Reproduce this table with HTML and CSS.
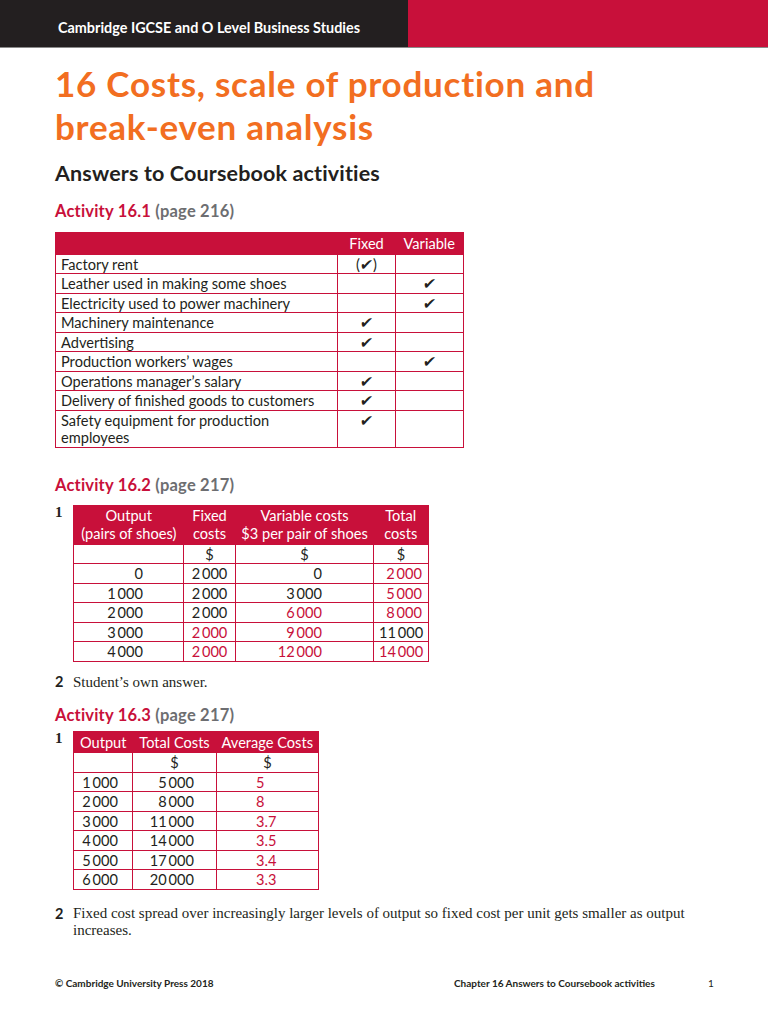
FILE: index.html
```html
<!DOCTYPE html>
<html lang="en">
<head>
<meta charset="utf-8">
<title>Costs, scale of production and break-even analysis</title>
<link rel="stylesheet" href="styles.css">
</head>
<body>
<header class="topbar">
  <div class="topbar-dark"><span class="book">Cambridge IGCSE and O Level Business Studies</span></div>
  <div class="topbar-red"></div>
</header>

<main class="page">
  <h1 class="title">16 Costs, scale of production and<br>break-even analysis</h1>
  <h2 class="subtitle">Answers to Coursebook activities</h2>

  <h3 class="activity a1"><span class="act">Activity 16.1</span> <span class="pg">(page 216)</span></h3>
  <table class="tbl t1">
    <thead>
      <tr><th class="c-item"></th><th class="c-fix">Fixed</th><th class="c-var">Variable</th></tr>
    </thead>
    <tbody>
      <tr><td>Factory rent</td><td class="ck">(<span class="tick">✔</span>)</td><td></td></tr>
      <tr><td>Leather used in making some shoes</td><td></td><td class="ck"><span class="tick">✔</span></td></tr>
      <tr><td>Electricity used to power machinery</td><td></td><td class="ck"><span class="tick">✔</span></td></tr>
      <tr><td>Machinery maintenance</td><td class="ck"><span class="tick">✔</span></td><td></td></tr>
      <tr><td>Advertising</td><td class="ck"><span class="tick">✔</span></td><td></td></tr>
      <tr><td>Production workers’ wages</td><td></td><td class="ck"><span class="tick">✔</span></td></tr>
      <tr><td>Operations manager’s salary</td><td class="ck"><span class="tick">✔</span></td><td></td></tr>
      <tr><td>Delivery of finished goods to customers</td><td class="ck"><span class="tick">✔</span></td><td></td></tr>
      <tr><td>Safety equipment for production<br>employees</td><td class="ck"><span class="tick">✔</span></td><td></td></tr>
    </tbody>
  </table>

  <h3 class="activity a2"><span class="act">Activity 16.2</span> <span class="pg">(page 217)</span></h3>
  <div class="q">
    <span class="qn">1</span>
    <table class="tbl t2">
      <thead>
        <tr><th class="w-out">Output<br>(pairs of shoes)</th><th class="w-fix">Fixed<br>costs</th><th class="w-var">Variable costs<br>$3 per pair of shoes</th><th class="w-tot">Total<br>costs</th></tr>
      </thead>
      <tbody>
        <tr><td></td><td class="ctr">$</td><td class="ctr">$</td><td class="ctr">$</td></tr>
        <tr><td class="r-out">0</td><td class="ctr">2&#8201;000</td><td class="r-var">0</td><td class="r-tot red">2&#8201;000</td></tr>
        <tr><td class="r-out">1&#8201;000</td><td class="ctr">2&#8201;000</td><td class="r-var">3&#8201;000</td><td class="r-tot red">5&#8201;000</td></tr>
        <tr><td class="r-out">2&#8201;000</td><td class="ctr">2&#8201;000</td><td class="r-var red">6&#8201;000</td><td class="r-tot red">8&#8201;000</td></tr>
        <tr><td class="r-out">3&#8201;000</td><td class="ctr red">2&#8201;000</td><td class="r-var red">9&#8201;000</td><td class="r-tot">11&#8201;000</td></tr>
        <tr><td class="r-out">4&#8201;000</td><td class="ctr red">2&#8201;000</td><td class="r-var red">12&#8201;000</td><td class="r-tot red">14&#8201;000</td></tr>
      </tbody>
    </table>
  </div>
  <p class="ans"><span class="qn2">2</span>Student’s own answer.</p>

  <h3 class="activity a3"><span class="act">Activity 16.3</span> <span class="pg">(page 217)</span></h3>
  <div class="q">
    <span class="qn">1</span>
    <table class="tbl t3">
      <thead>
        <tr><th class="x-out">Output</th><th class="x-tot">Total Costs</th><th class="x-avg">Average Costs</th></tr>
      </thead>
      <tbody>
        <tr><td></td><td class="ctr">$</td><td class="ctr">$</td></tr>
        <tr><td class="s-out">1&#8201;000</td><td class="s-tot">5&#8201;000</td><td class="s-avg red">5</td></tr>
        <tr><td class="s-out">2&#8201;000</td><td class="s-tot">8&#8201;000</td><td class="s-avg red">8</td></tr>
        <tr><td class="s-out">3&#8201;000</td><td class="s-tot">11&#8201;000</td><td class="s-avg red">3.7</td></tr>
        <tr><td class="s-out">4&#8201;000</td><td class="s-tot">14&#8201;000</td><td class="s-avg red">3.5</td></tr>
        <tr><td class="s-out">5&#8201;000</td><td class="s-tot">17&#8201;000</td><td class="s-avg red">3.4</td></tr>
        <tr><td class="s-out">6&#8201;000</td><td class="s-tot">20&#8201;000</td><td class="s-avg red">3.3</td></tr>
      </tbody>
    </table>
  </div>
  <p class="ans hang"><span class="qn2">2</span><span>Fixed cost spread over increasingly larger levels of output so fixed cost per unit gets smaller as output increases.</span></p>
</main>

<footer class="foot">
  <span class="copy">© Cambridge University Press 2018</span>
  <span class="chap">Chapter 16 Answers to Coursebook activities</span>
  <span class="pno">1</span>
</footer>
</body>
</html>
```

FILE: styles.css
```css
* { box-sizing: border-box; }
html, body { margin: 0; padding: 0; }
body {
  width: 768px;
  height: 1024px;
  background: #fff;
  color: #231f20;
  font-family: Lato, "Open Sans", sans-serif;
  position: relative;
}

.topbar {
  display: flex;
  height: 48px;
  border-bottom: 1px solid #8a8a8a;
}
.topbar-dark {
  width: 408px;
  background: #231f20;
  display: flex;
  align-items: center;
  padding-left: 58px;
  padding-top: 8px;
}
.book {
  color: #fff;
  font-size: 14.4px;
  font-weight: 700;
}
.topbar-red {
  flex: 1;
  background: #c8103a;
}

.page {
  padding: 14px 0 0 55px;
}

.title {
  margin: 0;
  color: #f26e21;
  font-size: 35px;
  font-weight: 700;
  line-height: 43px;
  letter-spacing: 0.75px;
}
.subtitle {
  margin: 12px 0 0;
  font-size: 21.5px;
  font-weight: 700;
  line-height: 26px;
  letter-spacing: 0.15px;
  color: #231f20;
}
.activity {
  margin: 12px 0 7px;
  font-size: 16.5px;
  font-weight: 700;
  line-height: 20px;
  letter-spacing: 0.2px;
}
.act { color: #c8103a; }
.pg { color: #6d6e71; }
.a1 { margin-top: 15px; margin-bottom: 11px; }
.a2 { margin-top: 27px; margin-bottom: 10px; }
.a3 { margin-top: 14px; margin-bottom: 6px; }

.tbl {
  border-collapse: collapse;
  table-layout: fixed;
  font-size: 14.6px;
  line-height: 17.5px;
  border: 1.5px solid #c8103a;
}
.tbl th {
  background: #c8103a;
  color: #fff;
  font-weight: 400;
  padding: 2px 2px 1px;
  text-align: center;
  border: none;
  white-space: nowrap;
}
.tbl td {
  border: 1px solid #c8103a;
  padding: 1px 5px 0;
  color: #231f20;
  white-space: nowrap;
}
.tbl tbody tr + tr td { border-top-color: #d95e78; }
.tbl td.red { color: #c8103a; }
.ctr { text-align: center; }

.t1 { width: 408px; }
.t1 .c-item { width: 282px; }
.t1 .c-fix { width: 58px; }
.t1 .c-var { width: 68px; }
.t1 .ck { text-align: center; vertical-align: top; }
.tick {
  font-family: "DejaVu Sans", sans-serif;
  font-size: 15.5px;
  line-height: 0;
  display: inline-block;
  transform: skewX(-8deg);
}

.q {
  display: flex;
  align-items: flex-start;
}
.qn {
  width: 18px;
  font-family: "Liberation Serif", serif;
  font-weight: 700;
  font-size: 15px;
  line-height: 14px;
}
.t2 { width: 355px; }
.t2 th { line-height: 18.5px; padding: 1px 0 0; }
.w-out { width: 110px; }
.w-fix { width: 52px; }
.w-var { width: 138px; }
.w-tot { width: 55px; }
.r-out { text-align: right; padding-right: 40px !important; }
.r-var { text-align: right; padding-right: 51px !important; }
.r-tot { text-align: right; padding-right: 6px !important; }

.ans {
  margin: 11px 0 0;
  font-family: "Liberation Serif", serif;
  font-size: 15px;
  line-height: 17px;
  color: #231f20;
}
.qn2 {
  font-family: Lato, sans-serif;
  font-weight: 700;
  font-size: 14.5px;
  display: inline-block;
  width: 18px;
}
.hang {
  display: flex;
  margin-top: 15px;
  width: 650px;
}
.hang .qn2 { flex: none; }

.t3 { width: 245px; }
.x-out { width: 59px; }
.x-tot { width: 84px; }
.x-avg { width: 102px; }
.s-out { text-align: right; padding-right: 14px !important; }
.s-tot { text-align: right; padding-right: 22px !important; }
.s-avg { text-align: left; padding-left: 39px !important; }

.foot {
  position: absolute;
  left: 55px;
  top: 976px;
  width: 660px;
  display: flex;
  font-size: 10px;
  font-weight: 700;
  color: #231f20;
  line-height: 14px;
}
.copy { width: 399px; }
.chap { width: 254px; }
.pno { font-weight: 400; }
```
